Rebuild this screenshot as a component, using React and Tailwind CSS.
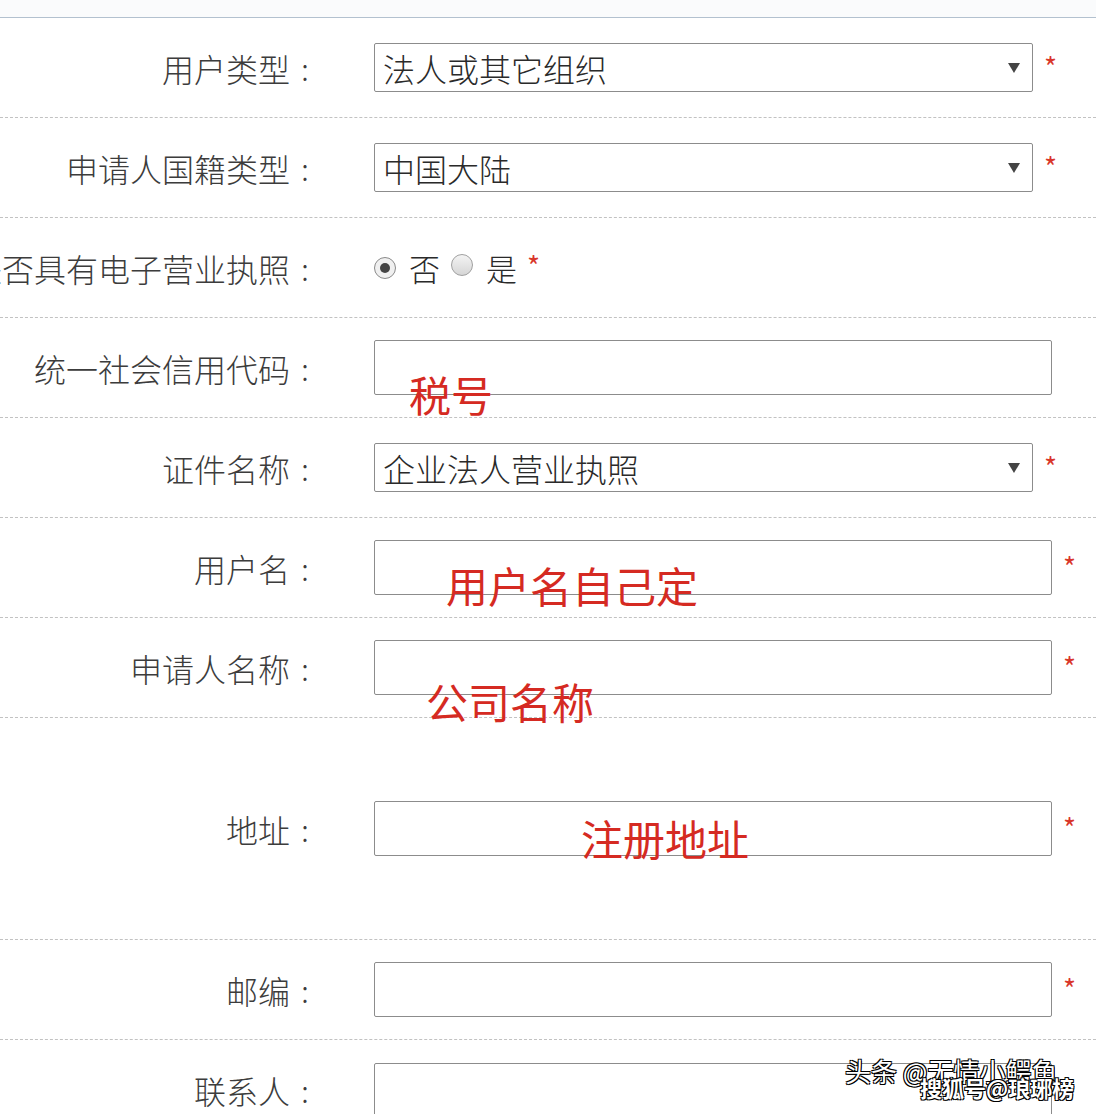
import React from "react";

const font = { fontFamily: '"Noto Sans CJK SC", "Noto Sans", sans-serif' };

const Star = ({ className = "" }) => (
  <span className={`text-[28px] leading-none text-[#d9362b] ${className}`}>*</span>
);

const Label = ({ children }) => (
  <div className="w-[320px] shrink-0 flex justify-end items-center">
    <span className="whitespace-nowrap text-[32px] leading-none font-light text-[#3c3c3c]">{children}</span>
    <span className="w-[30px] shrink-0 text-center text-[30px] leading-none font-light text-[#3c3c3c]">:</span>
  </div>
);

const Select = ({ value }) => (
  <div className="flex items-center">
    <div className="w-[659px] h-[49px] border border-[#8c8c8c] rounded-[2px] bg-white flex items-center justify-between pl-[8px] pr-[12px]">
      <span className="text-[32px] leading-none text-[#2a2a2a] font-light">{value}</span>
      <svg width="12" height="10" viewBox="0 0 12 10">
        <path d="M0 0 L12 0 L6 10 Z" fill="#444" />
      </svg>
    </div>
    <Star className="ml-[11px] -mt-[4px]" />
  </div>
);

const Input = ({ star = true }) => (
  <div className="flex items-center">
    <div className="w-[678px] h-[55px] border border-[#8c8c8c] rounded-[2px] bg-white" />
    {star && <Star className="ml-[11px] -mt-[4px]" />}
  </div>
);

const Row = ({ label, children, h = "h-[100px]", last = false }) => (
  <div className={`flex items-center ${h} ${last ? "" : "border-b border-dashed border-[#c2c2c2]"}`}>
    <Label>{label}</Label>
    <div className="ml-[54px]">{children}</div>
  </div>
);

const Radio = ({ checked }) => (
  <span
    className={`inline-flex items-center justify-center w-[22px] h-[22px] rounded-full border ${
      checked ? "border-[#8a8a8a] bg-[#f0f0f0]" : "border-[#a0a0a0] bg-gradient-to-b from-[#f4f4f4] to-[#d6d6d6]"
    }`}
  >
    {checked && <span className="w-[10px] h-[10px] rounded-full bg-[#444]" />}
  </span>
);

const Note = ({ children, className }) => (
  <div className={`absolute text-[42px] leading-none text-[#d52a22] whitespace-nowrap ${className}`}>{children}</div>
);

const outline = { textShadow: "1px 1px 0 #000, -1px -1px 0 #000, 1px -1px 0 #000, -1px 1px 0 #000" };

export default function App() {
  return (
    <div className="relative w-[1096px] h-[1114px] overflow-hidden bg-white" style={font}>
      <div className="h-[18px] bg-[#fafbfc] border-b border-[#b3c1cf]" />
      <Row label="用户类型">
        <Select value="法人或其它组织" />
      </Row>
      <Row label="申请人国籍类型">
        <Select value="中国大陆" />
      </Row>
      <Row label="是否具有电子营业执照">
        <div className="flex items-center">
          <Radio checked />
          <span className="ml-[13px] text-[31px] leading-none font-light text-[#2a2a2a]">否</span>
          <span className="ml-[11px]"><Radio /></span>
          <span className="ml-[13px] text-[31px] leading-none font-light text-[#2a2a2a]">是</span>
          <Star className="ml-[10px] -mt-[6px]" />
        </div>
      </Row>
      <Row label="统一社会信用代码">
        <Input star={false} />
      </Row>
      <Row label="证件名称">
        <Select value="企业法人营业执照" />
      </Row>
      <Row label="用户名">
        <Input />
      </Row>
      <Row label="申请人名称">
        <Input />
      </Row>
      <Row label="地址" h="h-[222px]">
        <Input />
      </Row>
      <Row label="邮编">
        <Input />
      </Row>
      <Row label="联系人" last>
        <Input star={false} />
      </Row>

      <Note className="left-[409px] top-[373px]">税号</Note>
      <Note className="left-[446px] top-[564px]">用户名自己定</Note>
      <Note className="left-[426px] top-[680px]">公司名称</Note>
      <Note className="left-[581px] top-[817px]">注册地址</Note>

      <div className="absolute left-[845px] top-[1058px] text-[26px] leading-none text-white whitespace-nowrap" style={outline}>
        头条 @无情小鳄鱼
      </div>
      <div className="absolute left-[920px] top-[1076px] text-[22px] leading-none font-bold text-white whitespace-nowrap" style={outline}>
        搜狐号@琅琊榜
      </div>
    </div>
  );
}
